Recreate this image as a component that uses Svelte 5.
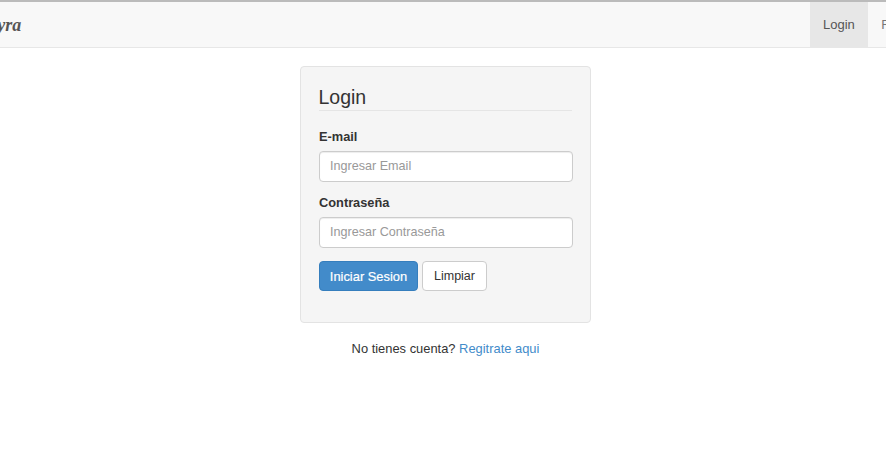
<script>
	let email = $state('');
	let password = $state('');
</script>

<nav class="navbar">
	<a class="brand" href="#top">Lyra</a>
	<ul class="nav">
		<li class="active"><a href="#login">Login</a></li>
		<li><a href="#registro">Registro</a></li>
	</ul>
</nav>

<main class="content">
	<form class="well">
		<h1 class="legend">Login</h1>
		<div class="group">
			<label for="email">E-mail</label>
			<input id="email" type="text" placeholder="Ingresar Email" bind:value={email} />
		</div>
		<div class="group">
			<label for="password">Contraseña</label>
			<input id="password" type="password" placeholder="Ingresar Contraseña" bind:value={password} />
		</div>
		<div class="actions">
			<button class="btn primary" type="submit">Iniciar Sesion</button>
			<button class="btn" type="reset">Limpiar</button>
		</div>
	</form>
	<p class="signup">No tienes cuenta? <a href="#registro">Regitrate aqui</a></p>
</main>

<style>
	:global(body) {
		background: #fff;
		color: #333;
		font-family: "Liberation Sans", Arial, sans-serif;
		font-size: 13px;
		overflow: hidden;
	}

	.navbar {
		display: flex;
		justify-content: space-between;
		height: 45px;
		background: #f8f8f8;
		border-top: 2px solid #bbb;
		border-bottom: 1px solid #e7e7e7;
		overflow: hidden;
	}

	.brand {
		margin: 1px 0 0 -13px;
		align-self: center;
		font-family: "Liberation Serif", serif;
		font-size: 18px;
		font-weight: bold;
		font-style: italic;
		color: #555;
		text-decoration: none;
	}

	.nav {
		display: flex;
		flex: none;
		width: 76px;
		margin: 0;
		padding: 0;
		list-style: none;
	}

	.nav li {
		flex: none;
	}

	.nav a {
		display: block;
		padding: 0 13.5px 0 13px;
		line-height: 45px;
		color: #777;
		text-decoration: none;
	}

	.nav .active a {
		background: #e7e7e7;
		color: #555;
	}

	.content {
		width: 291px;
		margin: 18px auto 0 300px;
	}

	.well {
		box-sizing: border-box;
		height: 257px;
		padding: 19px 18px 0;
		background: #f5f5f5;
		border: 1px solid #e3e3e3;
		border-radius: 4px;
	}

	.legend {
		margin: 0 0 17px;
		padding-bottom: 2px;
		font-size: 19.5px;
		font-weight: normal;
		line-height: 22px;
		text-indent: -0.5px;
		color: #333;
		border-bottom: 1px solid #e5e5e5;
	}

	.group {
		margin-bottom: 12px;
	}

	label {
		display: block;
		margin-bottom: 5px;
		font-size: 12.8px;
		font-weight: bold;
		line-height: 18px;
	}

	input {
		box-sizing: border-box;
		display: block;
		width: 254px;
		height: 31px;
		padding: 0 10px 2px;
		font-family: inherit;
		font-size: 12.6px;
		color: #555;
		background: #fff;
		border: 1px solid #ccc;
		border-radius: 4px;
		box-shadow: inset 0 1px 1px rgba(0, 0, 0, 0.075);
	}

	input::placeholder {
		color: #999;
		opacity: 1;
	}

	.actions {
		display: flex;
		gap: 4px;
		margin-top: 13px;
	}

	.btn {
		box-sizing: border-box;
		height: 30px;
		padding: 0 11px;
		font-family: inherit;
		font-size: 12.5px;
		color: #333;
		background: #fff;
		border: 1px solid #ccc;
		border-radius: 4px;
	}

	.btn.primary {
		width: 99px;
		padding: 0;
		font-size: 12.9px;
		-webkit-text-stroke: 0.2px #fff;
		color: #fff;
		background: #428bca;
		border-color: #357ebd;
	}

	.signup {
		margin: 17px 0 0;
		font-size: 12.9px;
		text-align: center;
		line-height: 18px;
	}

	.signup a {
		color: #428bca;
		text-decoration: none;
	}
</style>
